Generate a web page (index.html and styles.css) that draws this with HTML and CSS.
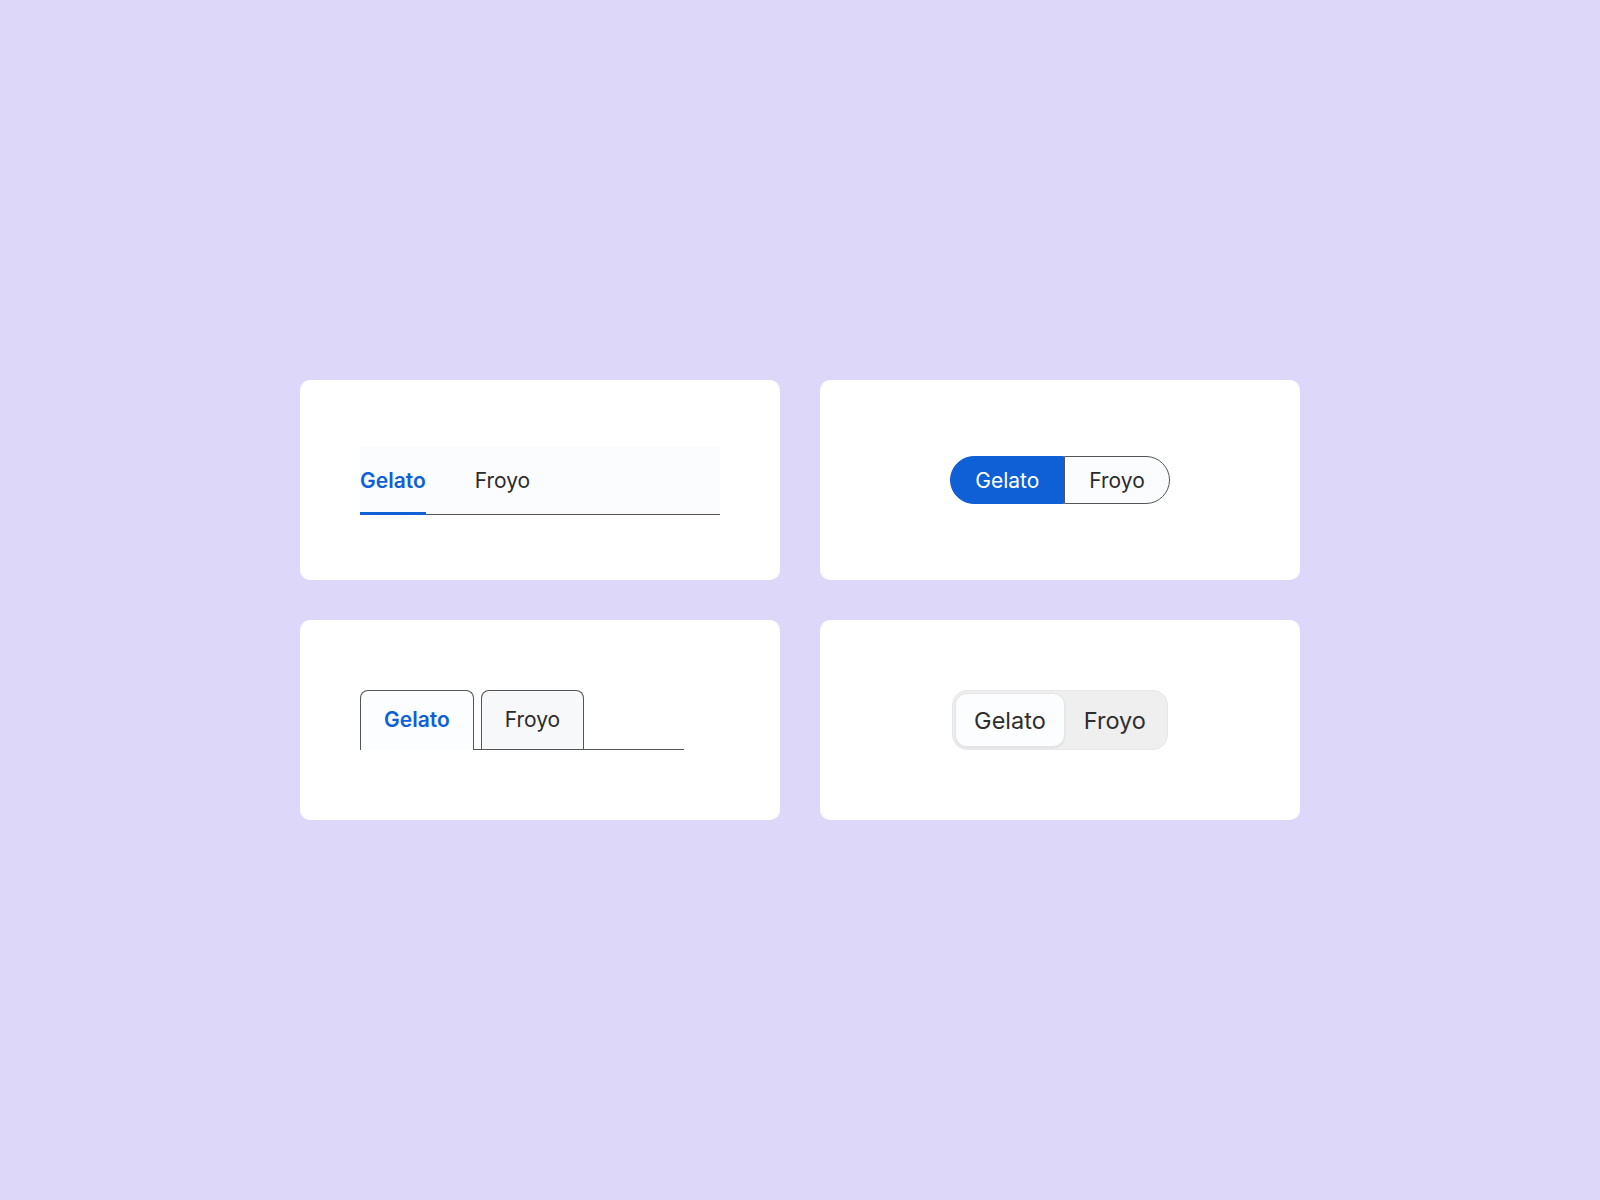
FILE: index.html
```html
<!DOCTYPE html>
<html lang="en">
<head>
<meta charset="utf-8">
<title>Tabs</title>
<link rel="stylesheet" href="styles.css">
</head>
<body>
<main class="grid">
  <section class="card">
    <div class="line-tabs">
      <button class="line-tab active">Gelato</button>
      <button class="line-tab">Froyo</button>
    </div>
  </section>
  <section class="card card-center">
    <div class="pill">
      <button class="pill-seg active">Gelato</button>
      <button class="pill-seg">Froyo</button>
    </div>
  </section>
  <section class="card">
    <div class="box-tabs">
      <button class="box-tab active">Gelato</button>
      <button class="box-tab">Froyo</button>
    </div>
  </section>
  <section class="card card-center">
    <div class="seg">
      <button class="seg-item active">Gelato</button>
      <button class="seg-item">Froyo</button>
    </div>
  </section>
</main>
</body>
</html>
```
FILE: styles.css
```css
* { box-sizing: border-box; }
html, body { margin: 0; padding: 0; }
body {
  background: #ddd8fa;
  font-family: Inter, "Noto Sans", sans-serif;
  min-height: 100vh;
  display: flex;
  align-items: center;
  justify-content: center;
}
button {
  font: inherit;
  margin: 0;
  border: 0;
  background: none;
  cursor: pointer;
}
.grid {
  display: grid;
  grid-template-columns: 480px 480px;
  grid-auto-rows: 200px;
  gap: 40px;
}
.card {
  background: #fff;
  border-radius: 10px;
  padding: 0 60px;
  display: flex;
  align-items: center;
}
.card-center { justify-content: center; }

/* Card 1 */
.line-tabs {
  width: 360px;
  display: flex;
  gap: 49px;
  background: #fbfcfe;
  border-bottom: 1px solid #555;
}
.line-tab {
  font-size: 21px;
  line-height: 24px;
  padding: 23px 0 19px;
  border-bottom: 3px solid transparent;
  margin-bottom: -1px;
  color: #2b2b2b;
}
.line-tab.active {
  color: #0f5fd7;
  font-weight: 600;
  border-bottom-color: #0f5fd7;
}

/* Card 2 */
.pill { display: flex; }
.pill-seg {
  font-size: 21px;
  line-height: 24px;
  padding: 12px 24px 10px;
  border: 1px solid #555;
  color: #2b2b2b;
  background: #fbfcfe;
  border-radius: 0 24px 24px 0;
}
.pill-seg.active {
  background: #0f5fd7;
  border-color: #0f5fd7;
  color: #fff;
  border-radius: 24px 0 0 24px;
}

/* Card 3 */
.box-tabs {
  width: 324px;
  display: flex;
  align-items: flex-start;
  gap: 7px;
  border-bottom: 1px solid #555;
}
.box-tab {
  font-size: 21px;
  line-height: 24px;
  padding: 17px 23px;
  border: 1px solid #555;
  border-bottom: 0;
  border-radius: 8px 8px 0 0;
  background: #f7f8fa;
  color: #2b2b2b;
}
.box-tab.active {
  background: #fbfdff;
  color: #0f5fd7;
  font-weight: 600;
  padding-bottom: 18px;
  margin-bottom: -1px;
}

/* Card 4 */
.seg {
  display: flex;
  padding: 2px;
  background: #efefef;
  border: 1px solid #e7e7e7;
  border-radius: 15px;
}
.seg-item {
  font-size: 23.5px;
  line-height: 28px;
  padding: 13px 18px 11px;
  border: 1px solid transparent;
  border-radius: 12px;
  color: #2e2e2e;
}
.seg-item.active {
  background: #fcfdfe;
  border-color: #e6e6e6;
  box-shadow: 0 1px 2px rgba(0,0,0,0.08);
}
```
